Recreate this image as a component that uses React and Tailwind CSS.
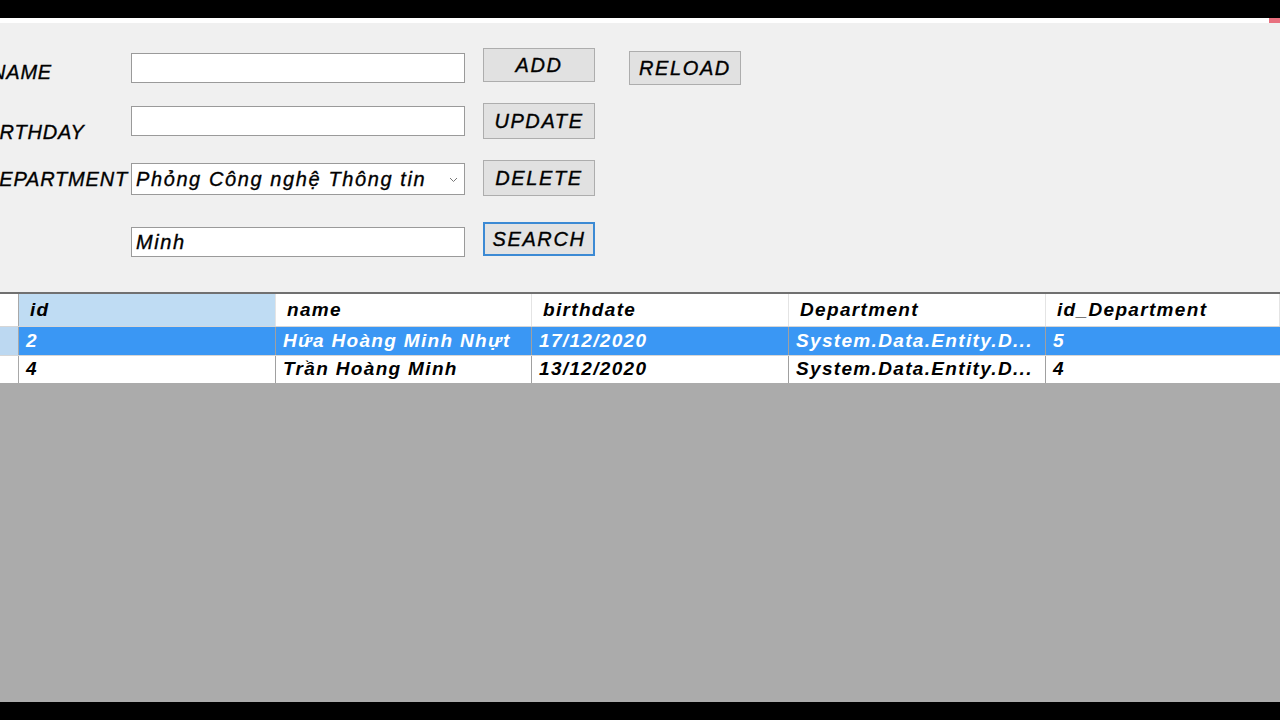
import React from "react";

const font = "font-['Liberation_Sans',Arial,sans-serif] italic";
// form texts look a touch heavier than regular weight
const formText = "text-[20px] tracking-[0.08em] [-webkit-text-stroke:0.35px_black]";

function Btn({ label, border = "border border-[#adadad] bg-[#e1e1e1]", className = "" }) {
  return (
    <div
      className={`w-[112px] flex items-center justify-center text-black ${border} ${formText} ${className}`}
    >
      {label}
    </div>
  );
}

function Field({ value = "", className = "" }) {
  return (
    <div
      className={`w-[334px] h-[30px] bg-white border border-[#9a9a9a] flex items-center pl-[4px] ${formText} ${className}`}
    >
      {value}
    </div>
  );
}

function Label({ text, offset, className = "" }) {
  return (
    <div className={`w-[131px] shrink-0 leading-[22px] whitespace-nowrap text-[20px] tracking-[0.04em] [-webkit-text-stroke:0.35px_black] ${className}`}>
      <span className={`inline-block ${offset}`}>{text}</span>
    </div>
  );
}

const cols = ["id", "name", "birthdate", "Department", "id_Department"];
const rows = [
  ["2", "Hứa Hoàng Minh Nhựt", "17/12/2020", "System.Data.Entity.D...", "5"],
  ["4", "Trần Hoàng Minh", "13/12/2020", "System.Data.Entity.D...", "4"],
];

export default function App() {
  return (
    <div className={`w-[1280px] h-[720px] overflow-hidden flex flex-col ${font}`}>
      <div className="h-[18px] bg-black shrink-0" />
      <div className="h-[5px] bg-white flex shrink-0">
        <div className="ml-auto w-[11px] bg-[#e8707f]" />
      </div>

      {/* form */}
      <div className="h-[269px] bg-[#f0f0f0] shrink-0 pt-[25px] overflow-hidden">
        <div className="flex items-start h-[34px]">
          <Label text="NAME" offset="ml-[-9px]" className="mt-[13px]" />
          <Field className="mt-[5px]" />
          <Btn label="ADD" className="ml-[18px] h-[34px]" />
          <Btn label="RELOAD" className="ml-[34px] mt-[3px] h-[34px]" />
        </div>

        <div className="flex items-start h-[36px] mt-[21px]">
          <Label text="BIRTHDAY" offset="ml-[-21px]" className="mt-[18px]" />
          <Field className="mt-[3px]" />
          <Btn label="UPDATE" className="ml-[18px] h-[36px]" />
        </div>

        <div className="flex items-start h-[36px] mt-[21px]">
          <Label text="DEPARTMENT" offset="ml-[-16px]" className="mt-[8px]" />
          <div className={`w-[334px] h-[32px] mt-[3px] bg-white border border-[#9a9a9a] flex items-center pl-[4px] pr-[6px] ${formText}`}>
            <span className="flex-1 whitespace-nowrap overflow-hidden">Phỏng Công nghệ Thông tin</span>
            <svg width="9" height="6" viewBox="0 0 9 6" className="mt-[2px] shrink-0">
              <path d="M1 1 L4.5 4.5 L8 1" fill="none" stroke="#777" strokeWidth="1" />
            </svg>
          </div>
          <Btn label="DELETE" className="ml-[18px] h-[36px]" />
        </div>

        <div className="flex items-start h-[34px] mt-[26px]">
          <div className="w-[131px] shrink-0" />
          <Field value="Minh" className="mt-[5px]" />
          <Btn label="SEARCH" border="border-2 border-[#3c8ad4] bg-[#e3e3e3]" className="ml-[18px] h-[34px]" />
        </div>
      </div>

      {/* grid */}
      <div className="flex-1 bg-[#ababab] flex flex-col border-t-2 border-[#707070]">
        <div className="grid grid-cols-[19px_257px_256px_257px_257px_1fr] h-[32px] bg-white text-[19px] font-bold tracking-[0.07em]">
          <div className="border-r border-[#a8a8a8]" />
          {cols.map((c, i) => (
            <div
              key={c}
              className={`flex items-center pl-[11px] border-r border-[#e4e4e4] whitespace-nowrap ${i === 0 ? "bg-[#bfdcf3]" : ""}`}
            >
              {c}
            </div>
          ))}
        </div>
        {rows.map((r, ri) => (
          <div
            key={ri}
            className={`grid grid-cols-[19px_257px_256px_257px_257px_1fr] text-[19px] font-bold tracking-[0.07em] border-t border-[#d6d6d6] ${
              ri === 0 ? "h-[29px] bg-[#3a97f4] text-white" : "h-[28px] bg-white text-black"
            }`}
          >
            <div className={`border-r border-[#a8a8a8] ${ri === 0 ? "bg-[#bcd8f1]" : "bg-white"}`} />
            {r.map((v, ci) => (
              <div
                key={ci}
                className={`flex items-center pl-[7px] whitespace-nowrap overflow-hidden ${ci < 4 ? "border-r border-[#a0a0a0]" : ""}`}
              >
                {v}
              </div>
            ))}
          </div>
        ))}
      </div>
      <div className="h-[18px] bg-black shrink-0" />
    </div>
  );
}
